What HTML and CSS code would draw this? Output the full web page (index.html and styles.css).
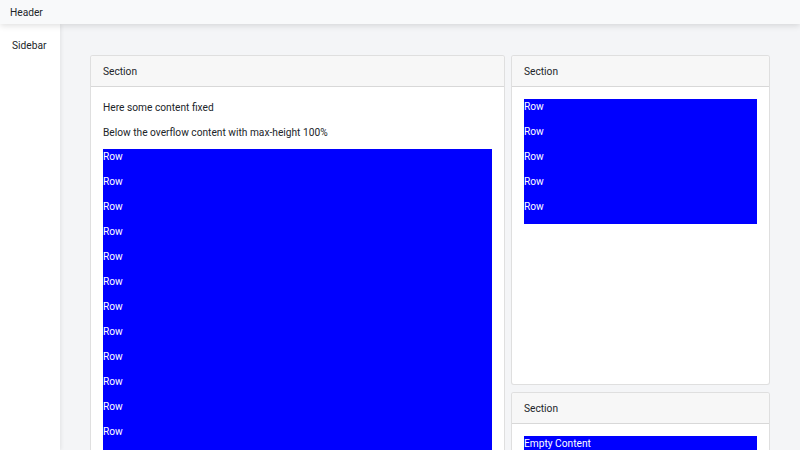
FILE: index.html
```html
<!DOCTYPE html>
<html>
<head>
<meta charset="utf-8">
<link rel="stylesheet" href="styles.css">
</head>
<body>
<header class="topbar">Header</header>
<div class="layout">
  <aside class="sidebar">Sidebar</aside>
  <main class="main">
    <section class="card card-left">
      <div class="card-header">Section</div>
      <div class="card-body">
        <p class="line">Here some content fixed</p>
        <p class="line">Below the overflow content with max-height 100%</p>
        <div class="blue">
          <p class="row">Row</p><p class="row">Row</p><p class="row">Row</p><p class="row">Row</p>
          <p class="row">Row</p><p class="row">Row</p><p class="row">Row</p><p class="row">Row</p>
          <p class="row">Row</p><p class="row">Row</p><p class="row">Row</p><p class="row">Row</p>
          <p class="row">Row</p><p class="row">Row</p>
        </div>
      </div>
    </section>
    <div class="right-col">
      <section class="card card-tall">
        <div class="card-header">Section</div>
        <div class="card-body">
          <div class="blue">
            <p class="row">Row</p><p class="row">Row</p><p class="row">Row</p><p class="row">Row</p><p class="row">Row</p>
          </div>
        </div>
      </section>
      <section class="card card-fill">
        <div class="card-header">Section</div>
        <div class="card-body">
          <div class="blue"><p class="row">Empty Content</p></div>
        </div>
      </section>
    </div>
  </main>
</div>
</body>
</html>
```
FILE: styles.css
```css
html, body {
  margin: 0;
  height: 100%;
  overflow: hidden;
}
body {
  font-family: "Roboto", "Open Sans", sans-serif;
  font-size: 10.2px;
  line-height: 16px;
  color: #212529;
  background: #f4f5f7;
}
.topbar {
  position: relative;
  z-index: 2;
  height: 23px;
  line-height: 23px;
  padding: 1px 0 0 10px;
  background: #f8f9fa;
  box-shadow: 0 2px 6px rgba(0,0,0,0.12);
}
.layout {
  display: flex;
  height: calc(100% - 24px);
}
.sidebar {
  width: 48px;
  padding: 14px 0 0 12px;
  background: #fff;
  box-shadow: 1px 0 4px rgba(0,0,0,0.08);
  flex: none;
}
.main {
  flex: 1;
  display: grid;
  grid-template-columns: 415px 259px;
  gap: 6px;
  padding: 31px 30px 0 30px;
  align-items: start;
}
.card {
  background: #fff;
  border: 1px solid rgba(0,0,0,0.125);
  border-radius: 3px;
  overflow: hidden;
}
.card-header {
  height: 29px;
  line-height: 29px;
  padding: 1px 12px 0 12px;
  background: #f7f7f7;
  border-bottom: 1px solid rgba(0,0,0,0.125);
}
.card-body {
  padding: 13px 12px 0 12px;
}
.line, .row {
  margin: 0 0 9px 0;
}
.line:nth-child(2) {
  margin-bottom: 8px;
}
.blue {
  display: flow-root;
  background: #0000ff;
  color: #fff;
}
.card-tall .card-body,
.card-fill .card-body {
  padding-top: 12px;
}
.right-col {
  display: flex;
  flex-direction: column;
  gap: 7px;
}
.card-tall {
  height: 328px;
}
.card-fill {
  height: 200px;
}
```
